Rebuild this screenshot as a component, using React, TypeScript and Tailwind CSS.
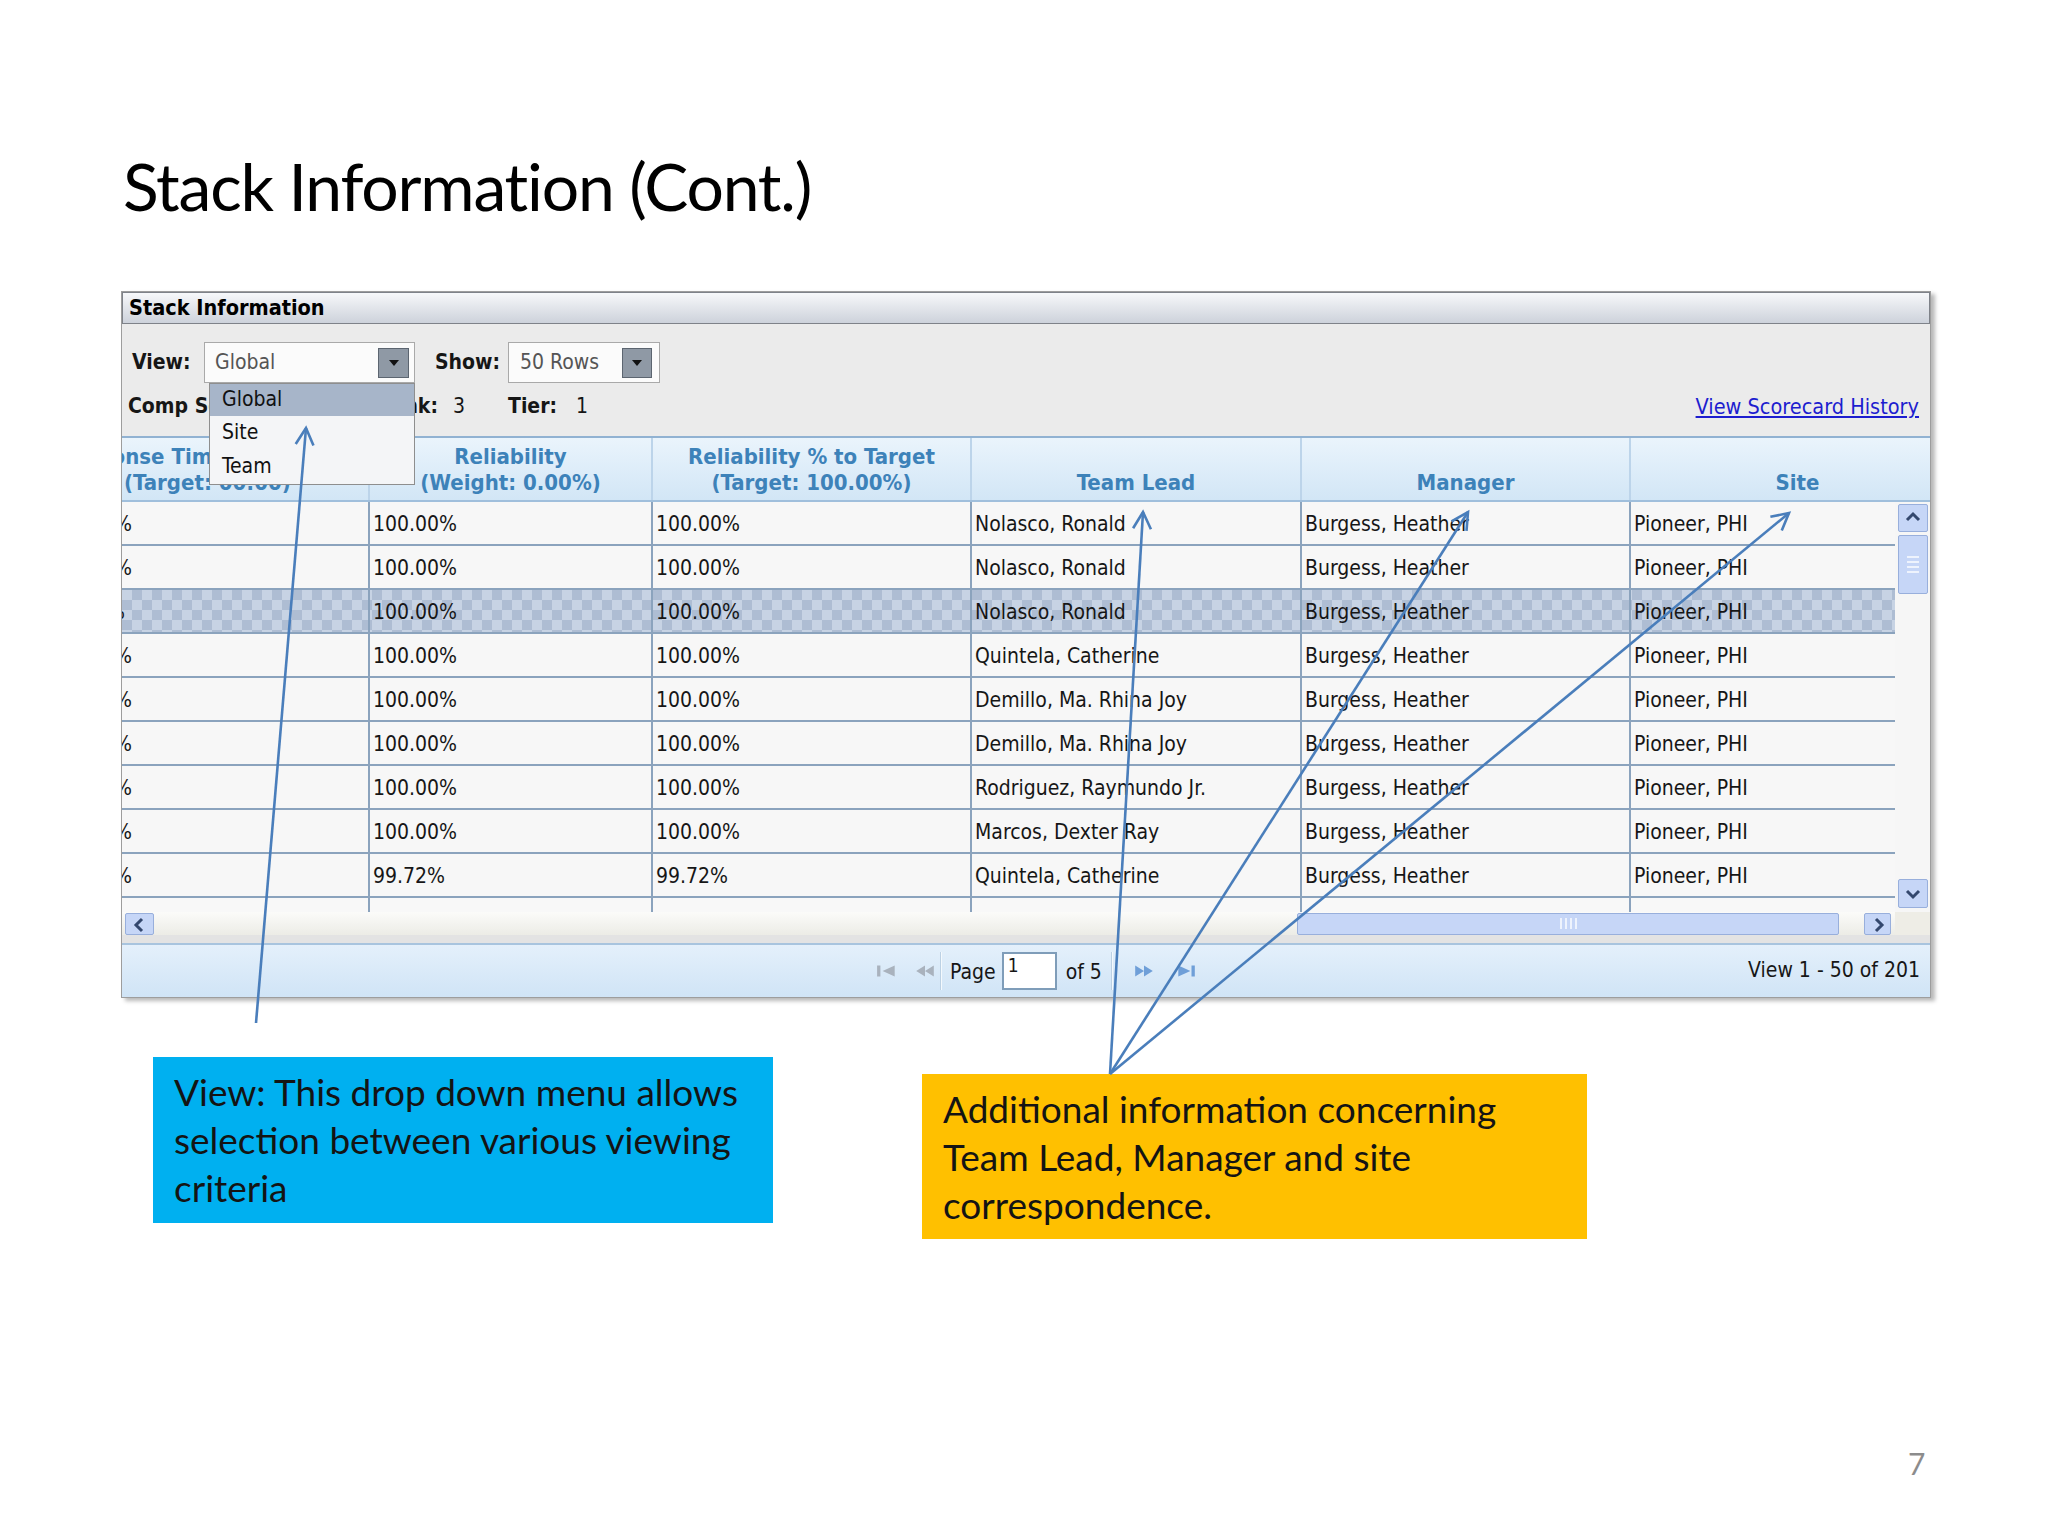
import React from "react";

const W = ["w-[248px]", "w-[283px]", "w-[319px]", "w-[330px]", "w-[329px]", "w-[264px]"];

const rows: string[][] = [
  ["100.00%", "100.00%", "Nolasco, Ronald", "Burgess, Heather", "Pioneer, PHI"],
  ["100.00%", "100.00%", "Nolasco, Ronald", "Burgess, Heather", "Pioneer, PHI"],
  ["100.00%", "100.00%", "Nolasco, Ronald", "Burgess, Heather", "Pioneer, PHI"],
  ["100.00%", "100.00%", "Quintela, Catherine", "Burgess, Heather", "Pioneer, PHI"],
  ["100.00%", "100.00%", "Demillo, Ma. Rhina Joy", "Burgess, Heather", "Pioneer, PHI"],
  ["100.00%", "100.00%", "Demillo, Ma. Rhina Joy", "Burgess, Heather", "Pioneer, PHI"],
  ["100.00%", "100.00%", "Rodriguez, Raymundo Jr.", "Burgess, Heather", "Pioneer, PHI"],
  ["100.00%", "100.00%", "Marcos, Dexter Ray", "Burgess, Heather", "Pioneer, PHI"],
  ["99.72%", "99.72%", "Quintela, Catherine", "Burgess, Heather", "Pioneer, PHI"],
];

function DownTri() {
  return (
    <svg width="12" height="8" viewBox="0 0 12 8">
      <path d="M1 1 L11 1 L6 7 Z" fill="#111" />
    </svg>
  );
}

function Arrows() {
  const color = "#4a7ebb";
  const lines: [number, number, number, number][] = [
    [256, 1023, 306, 428],
    [1110, 1074, 1143, 512],
    [1110, 1074, 1468, 512],
    [1110, 1074, 1789, 513],
  ];
  const heads = lines.map(([x1, y1, x2, y2]) => {
    const dx = x2 - x1;
    const dy = y2 - y1;
    const len = Math.hypot(dx, dy);
    const ux = dx / len;
    const uy = dy / len;
    const L = 19;
    const th = (28 * Math.PI) / 180;
    const r = (a: number) => [ux * Math.cos(a) - uy * Math.sin(a), ux * Math.sin(a) + uy * Math.cos(a)];
    const [ax, ay] = r(th);
    const [bx, by] = r(-th);
    return `M${x2 - L * ax} ${y2 - L * ay} L${x2} ${y2} L${x2 - L * bx} ${y2 - L * by}`;
  });
  return (
    <svg className="absolute left-0 top-0 pointer-events-none" width="2048" height="1536" viewBox="0 0 2048 1536">
      {lines.map(([x1, y1, x2, y2], i) => (
        <line key={i} x1={x1} y1={y1} x2={x2} y2={y2} stroke={color} strokeWidth="2.6" />
      ))}
      {heads.map((d, i) => (
        <path key={i} d={d} stroke={color} strokeWidth="2.6" fill="none" strokeLinejoin="miter" />
      ))}
    </svg>
  );
}

function ScrollBtn({ dir }: { dir: "up" | "down" | "left" | "right" }) {
  const paths: Record<string, string> = {
    up: "M4 11 L10 5 L16 11",
    down: "M4 6 L10 12 L16 6",
    left: "M12 4 L6 10 L12 16",
    right: "M8 4 L14 10 L8 16",
  };
  return (
    <svg width="20" height="18" viewBox="0 0 20 18">
      <path d={paths[dir]} stroke="#34486e" strokeWidth="3" fill="none" />
    </svg>
  );
}

function PagerIcon({ kind }: { kind: "first" | "prev" | "next" | "last" }) {
  const dis = kind === "first" || kind === "prev";
  const fill = dis ? "#a9b2bd" : "#6f9fd8";
  return (
    <svg width="22" height="16" viewBox="0 0 20 14">
      {kind === "first" && (
        <>
          <rect x="1" y="2" width="3" height="10" fill={fill} />
          <path d="M17 2 L6 7 L17 12 Z" fill={fill} />
        </>
      )}
      {kind === "prev" && <path d="M10 2 L2 7 L10 12 Z M18 2 L10 7 L18 12 Z" fill={fill} />}
      {kind === "next" && <path d="M2 2 L10 7 L2 12 Z M10 2 L18 7 L10 12 Z" fill={fill} />}
      {kind === "last" && (
        <>
          <path d="M3 2 L14 7 L3 12 Z" fill={fill} />
          <rect x="15" y="2" width="3" height="10" fill={fill} />
        </>
      )}
    </svg>
  );
}

export default function App() {
  return (
    <div className="relative w-[2048px] h-[1536px] overflow-hidden bg-white flex flex-col font-['Lato','Carlito',sans-serif]">
      {/* Title */}
      <div className="h-[291px] shrink-0 pl-[123px] pt-[153px]">
        <div className="text-[66px] leading-none tracking-[-1.2px] text-black">Stack Information (Cont.)</div>
      </div>

      {/* Panel */}
      <div className="relative ml-[121px] w-[1810px] shrink-0 border border-[#9d9d9d] bg-[#ebebeb] shadow-[4px_3px_4px_rgba(0,0,0,0.28)] font-['DejaVu_Sans_Condensed','DejaVu_Sans','Liberation_Sans',sans-serif] text-[21px] text-[#161616]">
        {/* Title bar */}
        <div className="h-[32px] flex items-center pl-[6px] border border-[#7e8289] bg-linear-to-b from-[#f7f8fa] to-[#cdd2db] font-bold text-[21.5px] text-black">
          Stack Information
        </div>

        {/* Toolbar */}
        <div className="h-[112px] pt-[18px]">
          <div className="h-[41px] flex items-center pl-[10px]">
            <span className="w-[72px] font-bold">View:</span>
            <div className="w-[211px] h-[41px] border border-[#a9a9a9] bg-[#fbfbfb] flex items-center pl-[10px] pr-[5px]">
              <span className="text-[#555] flex-1">Global</span>
              <div className="w-[31px] h-[30px] bg-[#8f99a5] border border-[#5c6570] flex items-center justify-center">
                <DownTri />
              </div>
            </div>
            <span className="ml-[20px] w-[73px] font-bold">Show:</span>
            <div className="w-[152px] h-[41px] border border-[#a9a9a9] bg-[#fbfbfb] flex items-center pl-[11px] pr-[7px]">
              <span className="text-[#555] flex-1">50 Rows</span>
              <div className="w-[30px] h-[30px] bg-[#8f99a5] border border-[#5c6570] flex items-center justify-center">
                <DownTri />
              </div>
            </div>
          </div>
          <div className="mt-[12px] h-[24px] flex items-center pl-[6px] pr-[11px]">
            <span className="w-[260px] whitespace-nowrap overflow-hidden font-bold">Comp Score: 98.75%</span>
            <div className="w-[50px] flex justify-end overflow-hidden">
              <span className="shrink-0 whitespace-nowrap font-bold">Rank:</span>
            </div>
            <span className="ml-[15px] w-[55px]">3</span>
            <span className="w-[68px] font-bold">Tier:</span>
            <span>1</span>
            <span className="ml-auto text-[21.5px] text-[#1d1dcf] underline">View Scorecard History</span>
          </div>
        </div>

        {/* Grid header */}
        <div className="h-[66px] flex border-t-2 border-b-2 border-t-[#91b2d2] border-b-[#a0bfdc] bg-linear-to-b from-[#eaf4fc] to-[#d2e6f6] font-bold text-[22px] text-[#3d82b9] leading-[26px]">
          <div className={`${W[0]} shrink-0 overflow-hidden whitespace-nowrap border-r-2 border-[#bcd4ea] flex flex-col justify-end pb-[4px] pl-[2px]`}>
            <div className="-ml-[67px]">Response Time</div>
            <div>(Target: 00:00)</div>
          </div>
          <div className={`${W[1]} shrink-0 border-r-2 border-[#bcd4ea] flex flex-col items-center justify-end pb-[4px]`}>
            <div>Reliability</div>
            <div>(Weight: 0.00%)</div>
          </div>
          <div className={`${W[2]} shrink-0 border-r-2 border-[#bcd4ea] flex flex-col items-center justify-end pb-[4px]`}>
            <div>Reliability % to Target</div>
            <div>(Target: 100.00%)</div>
          </div>
          <div className={`${W[3]} shrink-0 border-r-2 border-[#bcd4ea] flex flex-col items-center justify-end pb-[4px]`}>
            <div>Team Lead</div>
          </div>
          <div className={`${W[4]} shrink-0 border-r-2 border-[#bcd4ea] flex flex-col items-center justify-end pb-[4px]`}>
            <div>Manager</div>
          </div>
          <div className="flex-1 flex flex-col items-center justify-end pb-[4px] pl-[34px]">
            <div>Site</div>
          </div>
        </div>

        {/* Grid body */}
        <div className="h-[410px] flex">
          <div className="w-[1773px] shrink-0 flex flex-col overflow-hidden">
            {rows.map((r, i) => (
              <div
                key={i}
                className={
                  i === 2
                    ? "h-[44px] shrink-0 flex border-b-2 border-[#8ba3bd] bg-[#b9c7db] bg-[image:repeating-conic-gradient(#aebdd3_0%_25%,#c7d3e4_0%_50%)] bg-[length:20px_20px]"
                    : "h-[44px] shrink-0 flex border-b-2 border-[#8ba3bd] bg-[#f7f7f7]"
                }
              >
                <div className={`${W[0]} shrink-0 border-r-2 border-[#8ba3bd] flex items-center pt-[3px] overflow-hidden whitespace-nowrap`}>
                  <span className={i === 2 ? "-ml-[15px]" : "-ml-[8px]"}>%</span>
                </div>
                {r.map((c, j) => (
                  <div
                    key={j}
                    className={`${W[j + 1]} shrink-0 ${j < 4 ? "border-r-2 border-[#8ba3bd]" : ""} flex items-center pt-[3px] pl-[3px] whitespace-nowrap overflow-hidden`}
                  >
                    {c}
                  </div>
                ))}
              </div>
            ))}
            <div className="flex-1 flex bg-[#f8f8f8]">
              {W.map((w, j) => (
                <div key={j} className={`${w} shrink-0 ${j < 5 ? "border-r-2 border-[#8ba3bd]" : ""}`} />
              ))}
            </div>
          </div>
          <div className="flex-1 bg-[#f6f6f6] flex flex-col pl-[3px] pt-[2px] pb-[4px]">
            <div className="w-[30px] h-[28px] rounded-[2px] border border-[#98afdc] bg-[#c6d6f7] flex items-center justify-center">
              <ScrollBtn dir="up" />
            </div>
            <div className="mt-[3px] w-[30px] h-[59px] rounded-[2px] border border-[#98afdc] bg-[#c6d6f7] flex flex-col items-center justify-center gap-[3px]">
              <div className="w-[12px] h-[2px] bg-[#eef3fd]" />
              <div className="w-[12px] h-[2px] bg-[#eef3fd]" />
              <div className="w-[12px] h-[2px] bg-[#eef3fd]" />
              <div className="w-[12px] h-[2px] bg-[#eef3fd]" />
            </div>
            <div className="flex-1" />
            <div className="w-[30px] h-[29px] rounded-[2px] border border-[#98afdc] bg-[#c6d6f7] flex items-center justify-center">
              <ScrollBtn dir="down" />
            </div>
          </div>
        </div>

        {/* Horizontal scrollbar */}
        <div className="h-[23px] flex">
          <div className="w-[1773px] shrink-0 flex items-center bg-linear-to-b from-[#fbfbf9] to-[#ecece6]">
            <div className="ml-[3px] w-[29px] h-[22px] rounded-[2px] border border-[#98afdc] bg-[#c6d6f7] flex items-center justify-center">
              <ScrollBtn dir="left" />
            </div>
            <div className="ml-[1143px] w-[542px] h-[22px] rounded-[2px] border border-[#98afdc] bg-[#c6d6f7] flex items-center justify-center gap-[3px]">
              <div className="w-[2px] h-[11px] bg-[#eef3fd]" />
              <div className="w-[2px] h-[11px] bg-[#eef3fd]" />
              <div className="w-[2px] h-[11px] bg-[#eef3fd]" />
              <div className="w-[2px] h-[11px] bg-[#eef3fd]" />
            </div>
            <div className="ml-[25px] w-[27px] h-[22px] rounded-[2px] border border-[#98afdc] bg-[#c6d6f7] flex items-center justify-center">
              <ScrollBtn dir="right" />
            </div>
          </div>
          <div className="flex-1 bg-[#eeede6]" />
        </div>

        <div className="h-[8px] bg-[#e3e3e3]" />

        {/* Pager */}
        <div className="h-[54px] flex items-center border-t-2 border-[#a8c4de] bg-linear-to-b from-[#e4f0fb] to-[#d0e4f6] pl-[754px] pr-[10px]">
          <PagerIcon kind="first" />
          <span className="ml-[16px]"><PagerIcon kind="prev" /></span>
          <div className="ml-[4px] w-[2px] h-[38px] bg-[#bcd1e4] border-r border-[#f4f9fd]" />
          <span className="ml-[8px] pt-[4px]">Page</span>
          <div className="ml-[6px] w-[55px] h-[38px] bg-white border-2 border-[#7f9db9] pl-[4px] leading-[22px] text-[19px]">1</div>
          <span className="ml-[9px] pt-[4px]">of 5</span>
          <div className="ml-[9px] w-[2px] h-[38px] bg-[#bcd1e4] border-r border-[#f4f9fd]" />
          <span className="ml-[20px]"><PagerIcon kind="next" /></span>
          <span className="ml-[20px]"><PagerIcon kind="last" /></span>
          <span className="ml-auto">View 1 - 50 of 201</span>
        </div>

        {/* Dropdown menu (open) */}
        <div className="absolute left-[87px] top-[91px] w-[206px] h-[102px] border border-[#8e8e8e] bg-[#f4f5f7] flex flex-col text-[21px] text-[#111]">
          <div className="h-[32px] bg-[#a7b5c9] flex items-center pl-[12px]">Global</div>
          <div className="h-[35px] flex items-center pl-[12px]">Site</div>
          <div className="h-[35px] flex items-center pl-[12px]">Team</div>
        </div>
      </div>

      {/* Callouts */}
      <div className="mt-[59px] flex items-start shrink-0">
        <div className="ml-[153px] w-[620px] h-[166px] bg-[#00b0f0] pl-[21px] pt-[11px] text-[37px] leading-[48px] text-[#141414]">
          View: This drop down menu allows
          <br />
          selection between various viewing
          <br />
          criteria
        </div>
        <div className="ml-[149px] mt-[17px] w-[665px] h-[165px] bg-[#ffc000] pl-[21px] pt-[11px] text-[37px] leading-[48px] text-[#141414]">
          Additional information concerning
          <br />
          Team Lead, Manager and site
          <br />
          correspondence.
        </div>
      </div>

      {/* Slide number */}
      <div className="mt-[209px] pl-[1908px] text-[30px] leading-none text-[#8c8c8c]">7</div>

      <Arrows />
    </div>
  );
}
